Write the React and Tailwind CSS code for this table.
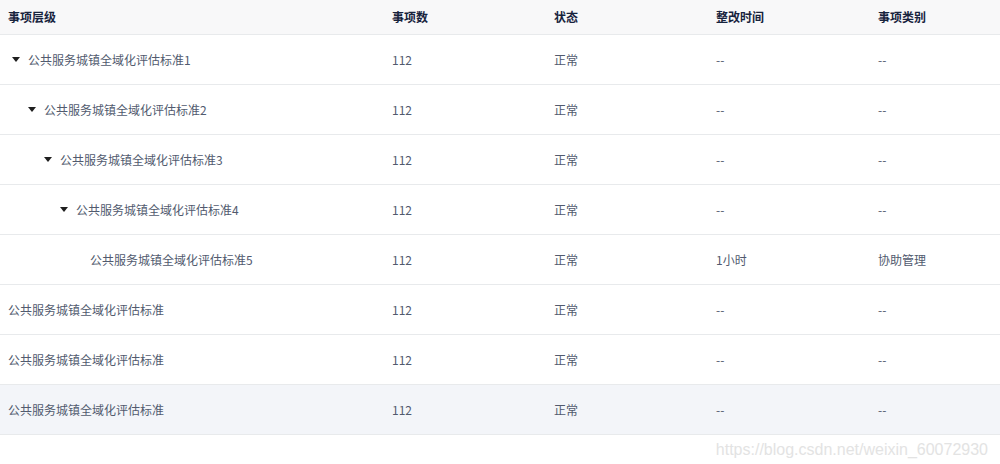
import React from 'react';

const rows = [
    { name: '公共服务城镇全域化评估标准1', level: 1, expand: true, time: '--', type: '--' },
    { name: '公共服务城镇全域化评估标准2', level: 2, expand: true, time: '--', type: '--' },
    { name: '公共服务城镇全域化评估标准3', level: 3, expand: true, time: '--', type: '--' },
    { name: '公共服务城镇全域化评估标准4', level: 4, expand: true, time: '--', type: '--' },
    { name: '公共服务城镇全域化评估标准5', level: 5, leaf: true, time: '1小时', type: '协助管理' },
    { name: '公共服务城镇全域化评估标准', level: 0, time: '--', type: '--' },
    { name: '公共服务城镇全域化评估标准', level: 0, time: '--', type: '--' },
    { name: '公共服务城镇全域化评估标准', level: 0, time: '--', type: '--', hover: true },
];

const indents = ['pl-0', 'pl-[4px]', 'pl-[20px]', 'pl-[36px]', 'pl-[52px]', 'pl-[82px]'];

function Caret() {
    return (
        <svg width="8" height="5" viewBox="0 0 8 5" className="shrink-0 mr-2">
            <path d="M0 0 L8 0 L4 5 Z" fill="#1f1f1f" />
        </svg>
    );
}

function App() {
    return (
        <div className="w-[1000px] h-[464px] bg-white text-[12px] text-[#515a6e]" style={{ fontFamily: '"Noto Sans CJK SC", "Noto Sans", sans-serif' }}>
            <div className="grid grid-cols-[384px_162px_162px_162px_130px] h-[35px] bg-[#f8f8f9] border-b border-[#e8eaec] font-bold text-[#17233d] items-center">
                <div className="pl-2">事项层级</div>
                <div className="pl-2">事项数</div>
                <div className="pl-2">状态</div>
                <div className="pl-2">整改时间</div>
                <div className="pl-2">事项类别</div>
            </div>
            {rows.map((r, i) => (
                <div
                    key={i}
                    className={`grid grid-cols-[384px_162px_162px_162px_130px] h-[50px] border-b border-[#e8eaec] items-center ${r.hover ? 'bg-[#f3f5f9]' : 'bg-white'}`}
                >
                    <div className="pl-2 flex items-center">
                        <div className={`flex items-center ${indents[r.level]}`}>
                            {r.expand && <Caret />}
                            <span>{r.name}</span>
                        </div>
                    </div>
                    <div className="pl-2">112</div>
                    <div className="pl-2">正常</div>
                    <div className="pl-2">{r.time}</div>
                    <div className="pl-2">{r.type}</div>
                </div>
            ))}
            <div className="flex justify-end pr-[12px] pt-[3px] text-[16px] leading-[24px] text-[#e3e3e3]" style={{ fontFamily: '"Liberation Sans", Arial, sans-serif' }}>
                https://blog.csdn.net/weixin_60072930
            </div>
        </div>
    );
}

export default App;
